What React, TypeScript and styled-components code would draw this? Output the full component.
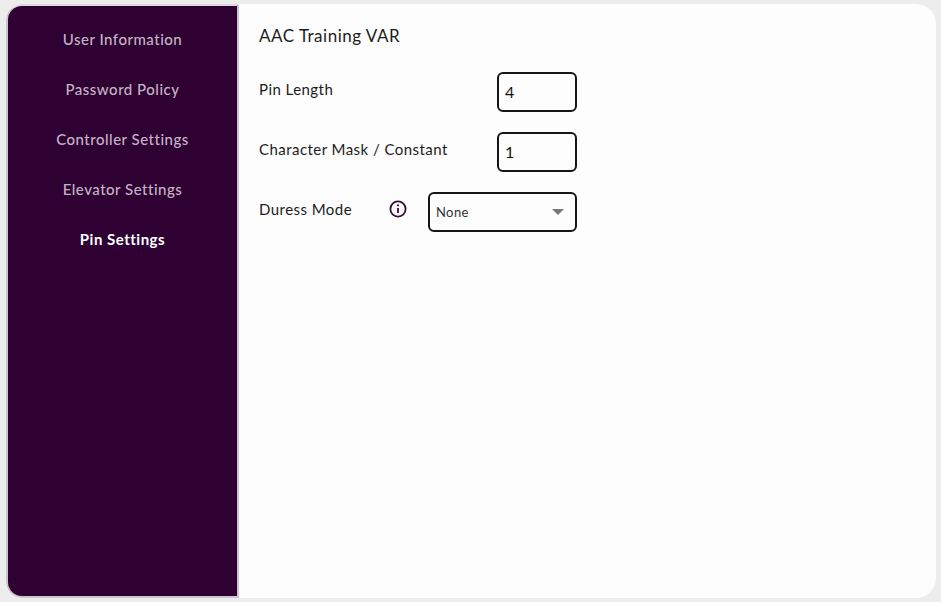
import React from "react";
import styled, { createGlobalStyle } from "styled-components";

const GlobalStyle = createGlobalStyle`
  html, body {
    margin: 0;
    height: 100%;
    background: #ededed;
    font-family: "Lato", "Open Sans", sans-serif;
  }
`;

const Page = styled.div`
  box-sizing: border-box;
  width: 941px;
  height: 602px;
  padding: 4px 5px 4px 6px;
`;

const Card = styled.div`
  display: flex;
  height: 100%;
  background: #fdfdfd;
  border-radius: 16px 20px 20px 16px;
  overflow: hidden;
`;

const Sidebar = styled.nav`
  box-sizing: border-box;
  flex: 0 0 233px;
  display: flex;
  flex-direction: column;
  padding-top: 8px;
  background: #2f0032;
  border: 2px solid #cbc6cc;
  border-top-color: #dcd8dc;
  border-radius: 16px 0 0 16px;
`;

const NavItem = styled.div<{ $active?: boolean }>`
  height: 50px;
  line-height: 50px;
  text-align: center;
  font-size: 15px;
  letter-spacing: 0.5px;
  font-weight: ${(p) => (p.$active ? 700 : 500)};
  color: ${(p) => (p.$active ? "#ffffff" : "#c5b4c6")};
`;

const Content = styled.main`
  flex: 1;
  padding: 22px 20px;
  color: #1c1c1c;
`;

const Title = styled.h1`
  margin: 0 0 26px;
  font-size: 17px;
  line-height: 20px;
  font-weight: 400;
  letter-spacing: 0.5px;
`;

const Form = styled.div`
  display: flex;
  flex-direction: column;
  gap: 20px;
  width: 318px;
`;

const Row = styled.div`
  display: flex;
  align-items: flex-start;
  height: 40px;
`;

const Label = styled.label`
  flex: 1;
  font-size: 15px;
  line-height: 20px;
  padding-top: 7px;
  letter-spacing: 0.45px;
`;

const TextBox = styled.input`
  box-sizing: border-box;
  width: 80px;
  height: 40px;
  padding: 0 6px 1px;
  border: 2px solid #151515;
  border-radius: 6px;
  background: #fdfdfd;
  color: #111;
  font: 400 16px "Lato", sans-serif;
  outline: none;
`;

const InfoIcon = styled.svg`
  width: 20px;
  height: 20px;
  margin: 7px 20px 0 0;
  color: #3a0a3c;
`;

const Select = styled.div`
  box-sizing: border-box;
  display: flex;
  align-items: center;
  justify-content: space-between;
  width: 149px;
  height: 40px;
  padding: 0 11px 0 6px;
  border: 2px solid #151515;
  border-radius: 6px;
  font-size: 13px;
  letter-spacing: 0.4px;
  color: #333;
`;

const Caret = styled.span`
  width: 0;
  height: 0;
  border-left: 6px solid transparent;
  border-right: 6px solid transparent;
  border-top: 6px solid #777;
`;

const navItems = [
  "User Information",
  "Password Policy",
  "Controller Settings",
  "Elevator Settings",
  "Pin Settings",
];

export default function App() {
  return (
    <Page>
      <GlobalStyle />
      <Card>
        <Sidebar>
          {navItems.map((item) => (
            <NavItem key={item} $active={item === "Pin Settings"}>
              {item}
            </NavItem>
          ))}
        </Sidebar>
        <Content>
          <Title>AAC Training VAR</Title>
          <Form>
            <Row>
              <Label>Pin Length</Label>
              <TextBox defaultValue="4" />
            </Row>
            <Row>
              <Label>Character Mask / Constant</Label>
              <TextBox defaultValue="1" />
            </Row>
            <Row>
              <Label>Duress Mode</Label>
              <InfoIcon viewBox="0 0 20 20" fill="none" stroke="currentColor">
                <circle cx="10" cy="10" r="7.6" strokeWidth="1.8" />
                <line x1="10" y1="9" x2="10" y2="14" strokeWidth="1.8" />
                <circle cx="10" cy="6.3" r="1.1" fill="currentColor" stroke="none" />
              </InfoIcon>
              <Select>
                None
                <Caret />
              </Select>
            </Row>
          </Form>
        </Content>
      </Card>
    </Page>
  );
}
